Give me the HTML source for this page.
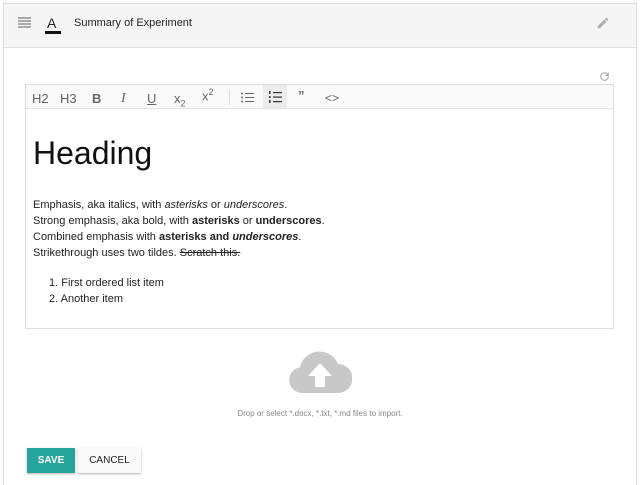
<!DOCTYPE html>
<html><head><meta charset="utf-8"><style>
*{box-sizing:border-box;margin:0;padding:0}
html,body{width:640px;height:485px;overflow:hidden}
body{background:#fff;font-family:"Liberation Sans",Arial,sans-serif;position:relative;color:#222}
.card{position:absolute;left:3px;top:3px;width:634px;height:482px;border:1px solid #ddd;border-bottom:none;background:#fff}
.abs{position:absolute}
.editor{position:absolute;left:25px;top:84px;width:589px;height:245px;border:1px solid #ddd}
.tb{height:24px;background:#fafafa;border-bottom:1px solid #e4e4e4;position:relative}
.tb span{position:absolute;top:6px;font-size:13px;color:#666}
</style></head><body>
<div class="card"></div>
<div class="abs" style="left:4px;top:4px;width:632px;height:44px;background:#f5f5f5;border-bottom:1px solid #e0e0e0"></div>
<svg class="abs" style="left:18px;top:17px" width="13" height="11"><g stroke="#777" stroke-width="1.2"><line x1="0" y1="1" x2="13" y2="1"/><line x1="0" y1="4" x2="13" y2="4"/><line x1="0" y1="7" x2="13" y2="7"/><line x1="0" y1="10" x2="13" y2="10"/></g></svg>
<div class="abs" style="left:47px;top:15px;font-size:14px;color:#222">A</div>
<div class="abs" style="left:45px;top:31px;width:16px;height:3px;background:#111"></div>
<div class="abs" style="left:74px;top:17px;font-size:11px;color:#222">Summary of Experiment</div>
<svg class="abs" style="left:596px;top:16px" width="14" height="14" viewBox="0 0 24 24"><path fill="#aaa" d="M3 17.25V21h3.75L17.8 9.94l-3.75-3.75L3 17.25zM20.7 7.04a1 1 0 000-1.41l-2.34-2.34a1 1 0 00-1.41 0l-1.83 1.83 3.75 3.75 1.83-1.83z"/></svg>
<svg class="abs" style="left:598px;top:70px" width="13" height="13" viewBox="0 0 24 24"><path fill="#aaa" d="M17.65 6.35A7.96 7.96 0 0012 4a8 8 0 108 8h-2a6 6 0 11-1.76-4.24L13 11h7V4l-2.35 2.35z"/></svg>
<div class="editor">
<div class="tb">
<span style="left:6px">H2</span><span style="left:34px">H3</span>
<span style="left:66px;font-weight:bold">B</span>
<span style="left:95px;font-style:italic;font-family:'Liberation Serif',serif;font-size:14px">I</span>
<span style="left:121px;text-decoration:underline">U</span>
<span style="left:148px">x<sub style="font-size:9px">2</sub></span>
<span style="left:176px;top:2px">x<sup style="font-size:9px">2</sup></span>
<div class="abs" style="left:203px;top:4px;width:1px;height:16px;background:#ddd"></div>
<svg class="abs" style="left:215px;top:7px" width="13" height="11"><g fill="#666"><circle cx="1" cy="1.5" r="1"/><circle cx="1" cy="5.5" r="1"/><circle cx="1" cy="9.5" r="1"/><rect x="4" y="1" width="9" height="1"/><rect x="4" y="5" width="9" height="1"/><rect x="4" y="9" width="9" height="1"/></g></svg>
<div class="abs" style="left:237px;top:0;width:24px;height:23px;background:#ececec"></div>
<svg class="abs" style="left:243px;top:6px" width="13" height="12"><g fill="#333"><rect x="0" y="0" width="1.5" height="3"/><rect x="0" y="5" width="1.5" height="2"/><rect x="0" y="9" width="1.5" height="3"/><rect x="4" y="1" width="9" height="1.2"/><rect x="4" y="5.5" width="9" height="1.2"/><rect x="4" y="10" width="9" height="1.2"/></g></svg>
<span style="left:272px;font-weight:bold;font-size:13px;top:3px">&#8221;</span>
<span style="left:299px;font-size:12px">&lt;&gt;</span>
</div>
<div class="abs" style="left:7px;top:50px;font-size:32px;color:#111">Heading</div>
<div class="abs" style="left:7px;top:112px;font-size:11px;line-height:16px;color:#222">
Emphasis, aka italics, with <i>asterisks</i> or <i>underscores</i>.<br>
Strong emphasis, aka bold, with <b>asterisks</b> or <b>underscores</b>.<br>
Combined emphasis with <b>asterisks and <i>underscores</i></b>.<br>
Strikethrough uses two tildes. <s>Scratch this.</s>
<div style="margin-top:14px;padding-left:16px">1. First ordered list item<br>2. Another item</div>
</div>
</div>
<svg class="abs" style="left:288px;top:351px" width="64" height="42" viewBox="0 0 64 42"><path fill="#c8c8c8" d="M14 42a13 13 0 01-2-25.8A20 20 0 0150 13a14.5 14.5 0 010 29z"/><path fill="#fff" d="M32 12l-12 13h7v11h10V25h7z"/></svg>
<div class="abs" style="left:0;width:640px;top:409px;text-align:center;font-size:8px;color:#888">Drop or select *.docx, *.txt, *.md files to import.</div>
<div class="abs" style="left:27px;top:448px;width:48px;height:25px;background:#26a69a;color:#fff;font-size:10px;font-weight:bold;text-align:center;line-height:25px;box-shadow:0 1px 2px rgba(0,0,0,.3)">SAVE</div>
<div class="abs" style="left:78px;top:448px;width:63px;height:25px;background:#fafafa;color:#222;font-size:10px;text-align:center;line-height:25px;box-shadow:0 1px 2px rgba(0,0,0,.3)">CANCEL</div>
</body></html>
